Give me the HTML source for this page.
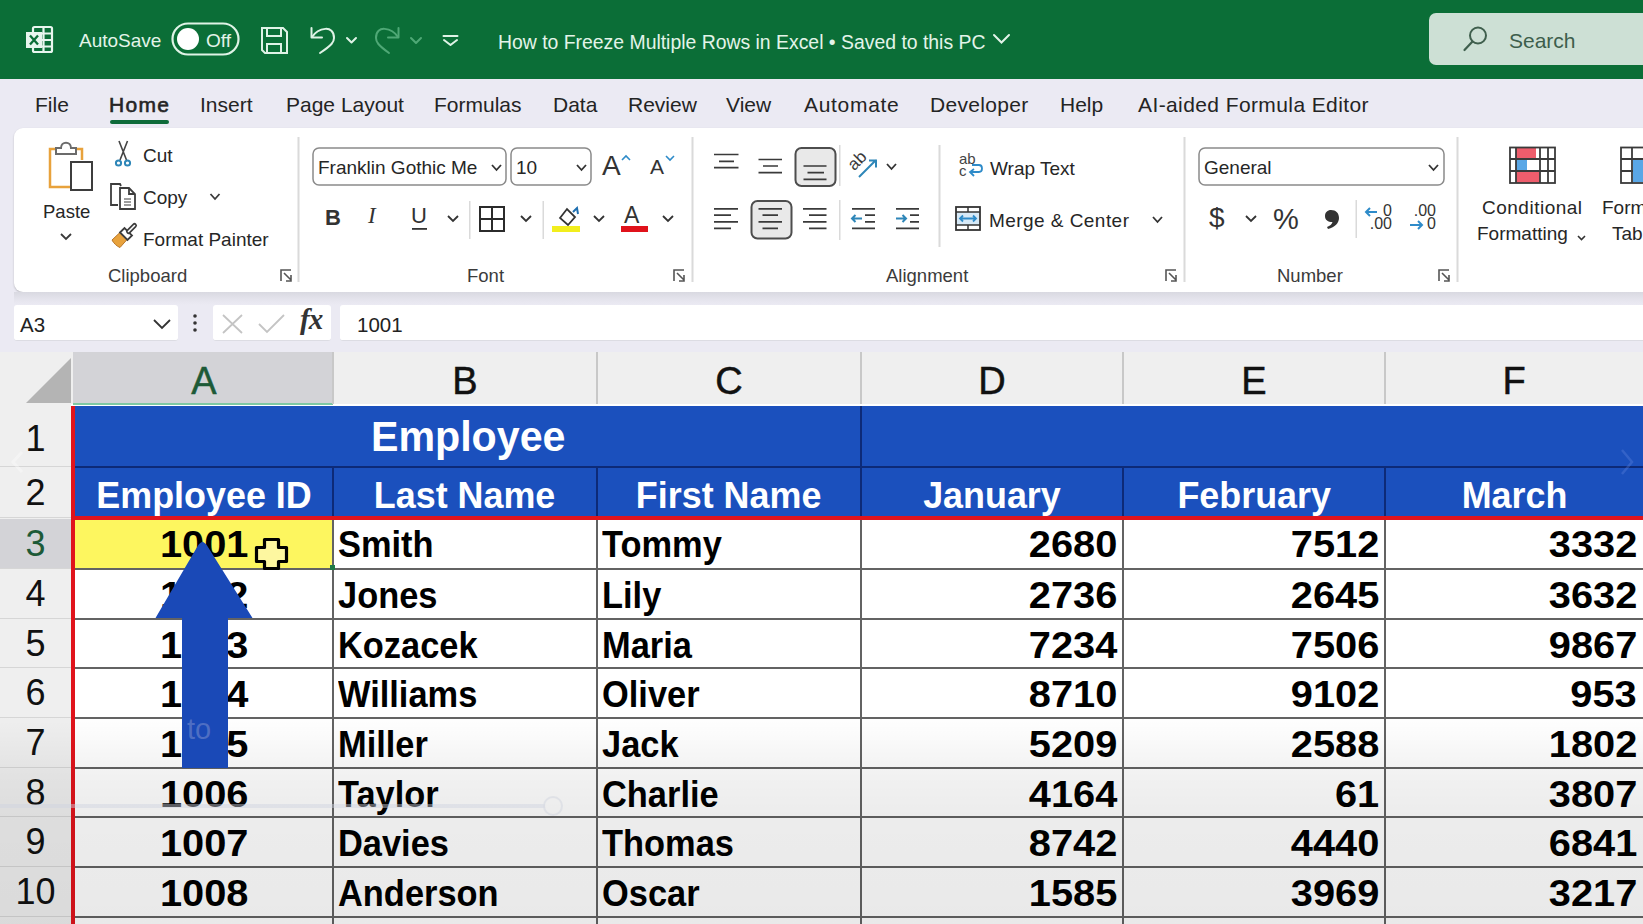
<!DOCTYPE html>
<html><head><meta charset="utf-8">
<style>
*{margin:0;padding:0;box-sizing:border-box}
html,body{width:1643px;height:924px;overflow:hidden;background:#fff;font-family:"Liberation Sans",sans-serif}
.a{position:absolute}
svg{position:absolute;overflow:visible}
#title{left:0;top:0;width:1643px;height:79px;background:#0b6e37}
.tt{position:absolute;color:#e3f4e9;white-space:nowrap;font-size:19px}
#tabs{left:0;top:79px;width:1643px;height:273px;background:#ebeaf3}
.tab{position:absolute;top:93px;font-size:21px;color:#242424;white-space:nowrap}
#ribbon{left:14px;top:128px;width:1660px;height:164px;background:#fff;border-radius:9px;box-shadow:0 1px 2px rgba(0,0,0,.22)}
.rt{position:absolute;font-size:19px;color:#262626;white-space:nowrap}
.gl{position:absolute;top:265px;font-size:18.5px;color:#3b3b3b;white-space:nowrap}
.sep{position:absolute;width:2px;background:#d9d9d9}
.box{position:absolute;background:#fff;border:1.5px solid #8a8a8a;border-radius:6px}
.ch{position:absolute;top:352px;height:51px;font-size:38px;color:#111;text-align:center;line-height:59px;-webkit-text-stroke:0.5px currentColor}
.chs{position:absolute;top:352px;width:2px;height:52px;background:#c8c8c8}
.rh{position:absolute;left:0;width:71px;font-size:36px;color:#111;text-align:center}
.c{position:absolute;font-weight:bold;font-size:37px;color:#000;white-space:nowrap;line-height:54px}
.c span{display:inline-block}
.sh{transform:scaleX(0.97)}
.sn{transform:scaleX(1.075)}
.st{transform:scaleX(0.93);transform-origin:left center}
.sr{transform:scaleX(1.075);transform-origin:right center}
.hl{position:absolute;height:2px;background:#636363}
.vl{position:absolute;width:2px;background:#636363}
.w{color:#fff}
</style></head><body>
<!-- TITLE BAR -->
<div id="title" class="a"></div>
<svg style="left:0;top:0" width="1643" height="78">
 <!-- excel icon -->
 <g fill="none" stroke="#e8f6ee" stroke-width="2.2">
  <rect x="33" y="27" width="19" height="25" rx="1.5"/>
  <path d="M39 33.5H51M39 40H51M39 46.5H51M43.5 27V52"/>
 </g>
 <rect x="26" y="32" width="16" height="16" fill="#e8f6ee"/>
 <path d="M30 35.5L38 44.5M38 35.5L30 44.5" stroke="#0b6e37" stroke-width="2.3"/>
 <!-- toggle -->
 <rect x="172.5" y="23.5" width="66" height="31" rx="15.5" fill="none" stroke="#dff3e6" stroke-width="2.2"/>
 <circle cx="188" cy="39" r="11" fill="#fff"/>
 <!-- save -->
 <g fill="none" stroke="#dff3e6" stroke-width="2">
  <path d="M262 28H283L287 32V53H265L262 50Z"/>
  <path d="M267 28V36H281V28M267 53V44H281V53"/>
 </g>
 <!-- undo -->
 <g fill="none" stroke="#dff3e6" stroke-width="2" stroke-linecap="round" stroke-linejoin="round">
  <path d="M311.5 28V37.5H322"/>
  <path d="M312 37C318 28 334 24 334 38C334 42 332 45 320 53"/>
  <path d="M347 38L351.5 42.5L356 38"/>
  <path d="M443.5 36H457.5M444 40L450.5 45L457 40"/>
 </g>
 <!-- redo dim -->
 <g fill="none" stroke="#4fa876" stroke-width="2" stroke-linecap="round" stroke-linejoin="round">
  <path d="M398.5 28V37.5H388"/>
  <path d="M398 37C392 28 376 24 376 38C376 42 378 45 389 53"/>
  <path d="M411 38L416 43L421 38"/>
 </g>
 <!-- title chevron -->
 <path d="M994 35L1001.5 42.5L1009 35" fill="none" stroke="#e3f4e9" stroke-width="2" stroke-linecap="round"/>
 <!-- search box -->
 <rect x="1429" y="13" width="240" height="52" rx="7" fill="#cde0d5"/>
 <circle cx="1478" cy="35.5" r="8" fill="none" stroke="#3f5f4d" stroke-width="2"/>
 <path d="M1472.5 41.5L1464.5 50" stroke="#3f5f4d" stroke-width="2.2" stroke-linecap="round"/>
</svg>
<div class="tt" style="left:79px;top:30px">AutoSave</div>
<div class="tt" style="left:206px;top:30px">Off</div>
<div class="tt" style="left:498px;top:31px;font-size:19.4px">How to Freeze Multiple Rows in Excel &#8226; Saved to this PC</div>
<div class="tt" style="left:1509px;top:29px;font-size:21px;color:#3d5e4c">Search</div>
<!-- TABS + formula bar bg -->
<div id="tabs" class="a"></div>
<div class="tab" style="left:35px">File</div>
<div class="tab" style="left:109px;-webkit-text-stroke:0.6px #242424;letter-spacing:1.3px">Home</div>
<div class="a" style="left:110px;top:120px;width:59px;height:4px;border-radius:2px;background:#0f6b3a"></div>
<div class="tab" style="left:200px">Insert</div>
<div class="tab" style="left:286px">Page Layout</div>
<div class="tab" style="left:434px">Formulas</div>
<div class="tab" style="left:553px">Data</div>
<div class="tab" style="left:628px">Review</div>
<div class="tab" style="left:726px">View</div>
<div class="tab" style="left:804px;letter-spacing:0.7px">Automate</div>
<div class="tab" style="left:930px;letter-spacing:0.3px">Developer</div>
<div class="tab" style="left:1060px">Help</div>
<div class="tab" style="left:1138px;letter-spacing:0.4px">AI-aided Formula Editor</div>
<!-- RIBBON -->
<div id="ribbon" class="a"></div>
<svg style="left:0;top:0" width="1643" height="300">
 <!-- separators -->
 <g fill="#dadada">
  <rect x="297.5" y="137" width="2" height="145"/>
  <rect x="691.5" y="137" width="2" height="145"/>
  <rect x="1183.5" y="137" width="2" height="145"/>
  <rect x="1456.5" y="137" width="2" height="145"/>
  <rect x="469" y="201" width="1.5" height="38"/>
  <rect x="542.5" y="201" width="1.5" height="38"/>
  <rect x="839" y="145" width="1.5" height="41"/>
  <rect x="839" y="200" width="1.5" height="40"/>
  <rect x="938.5" y="145" width="2" height="102"/>
  <rect x="1355.5" y="200" width="1.5" height="38"/>
 </g>
 <!-- paste clipboard -->
 <path d="M58 149H50V187H70" fill="none" stroke="#e8a23c" stroke-width="2.5"/>
 <path d="M76 149H82V160" fill="none" stroke="#e8a23c" stroke-width="2.5"/>
 <path d="M56 154V148H61C61 141 71 141 71 148H76V154Z" fill="#fff" stroke="#6b6b6b" stroke-width="2"/>
 <rect x="71" y="162" width="21" height="28" fill="#fff" stroke="#3d3d3d" stroke-width="2"/>
 <path d="M61 234L66 239L71 234" fill="none" stroke="#3a3a3a" stroke-width="1.8"/>
 <!-- cut -->
 <g fill="none" stroke-width="1.8">
  <path d="M119 141L126.5 160M127.5 141L120 160" stroke="#444" stroke-width="1.6"/>
  <circle cx="118.5" cy="163" r="2.6" stroke="#2e86b8" stroke-width="2"/>
  <circle cx="127.5" cy="163" r="2.6" stroke="#2e86b8" stroke-width="2"/>
 </g>
 <!-- copy -->
 <g fill="none" stroke="#3d3d3d" stroke-width="1.8">
  <path d="M118 205H111V184H120L121 186"/>
  <path d="M120 188V209H135V194L129 188Z"/>
  <path d="M129 188V194H135"/>
  <path d="M124 199H131M124 202H131M124 205H131" stroke-width="1.1"/>
 </g>
 <path d="M210.5 194L215 199L219.5 194" fill="none" stroke="#3a3a3a" stroke-width="1.8"/>
 <!-- format painter -->
 <path d="M112 240L120.5 232L127.5 239L120 247.5C117 246.5 113.5 243 112 240Z" fill="#e8a23c" stroke="#b9772a" stroke-width="1"/>
 <path d="M120 232.5L124.5 228L132 235.5L127.5 240Z" fill="#fff" stroke="#3d3d3d" stroke-width="1.8"/>
 <path d="M128.5 231.5L134.5 225.5" stroke="#3d3d3d" stroke-width="5" stroke-linecap="round"/>
 <path d="M128.5 231.5L134.5 225.5" stroke="#fff" stroke-width="1.6" stroke-linecap="round"/>
 <!-- launchers -->
 <g fill="none" stroke="#555" stroke-width="1.6">
  <path d="M281 281V270H291M284 273L291 280M291 275V281H286"/>
  <path d="M674 281V270H684M677 273L684 280M684 275V281H679"/>
  <path d="M1166 281V270H1176M1169 273L1176 280M1176 275V281H1171"/>
  <path d="M1439 281V270H1449M1442 273L1449 280M1449 275V281H1444"/>
 </g>
 <!-- font boxes -->
 <rect x="313" y="148" width="193" height="37" rx="6" fill="#fff" stroke="#8a8a8a" stroke-width="1.5"/>
 <rect x="511" y="148" width="80" height="37" rx="6" fill="#fff" stroke="#8a8a8a" stroke-width="1.5"/>
 <g fill="none" stroke="#333" stroke-width="1.8">
  <path d="M492 165L496.5 170L501 165"/>
  <path d="M577 165L581.5 170L586 165"/>
  <path d="M448 216L453 221L458 216"/>
  <path d="M521 216L526 221L531 216"/>
  <path d="M594 216L599 221L604 216"/>
  <path d="M663 216L668 221L673 216"/>
 </g>
 <!-- grow/shrink -->
 <path d="M622 160L626 156L630 160" fill="none" stroke="#2e8bc9" stroke-width="1.6"/>
 <path d="M666 156L670 160L674 156" fill="none" stroke="#2e8bc9" stroke-width="1.6"/>
 <!-- borders icon -->
 <g fill="none" stroke="#2b2b2b" stroke-width="2">
  <rect x="480" y="207" width="24" height="24"/>
  <path d="M492 207V231M480 219H504"/>
 </g>
 <!-- fill color -->
 <path d="M560 218L567 209L575 217L568 225Z" fill="#fff" stroke="#333" stroke-width="1.8"/>
 <path d="M573 212L577 208L578 214" fill="none" stroke="#1f6fb0" stroke-width="2"/>
 <rect x="552" y="226" width="28" height="6" fill="#f2ee1d"/>
 <rect x="621" y="226" width="27" height="6" fill="#e0121b"/>
 <!-- underline -->
 <rect x="412" y="228" width="15" height="1.8" fill="#333"/>
 <!-- alignment icons -->
 <rect x="795.5" y="148" width="40" height="38" rx="6" fill="#e9e9e9" stroke="#4d4d4d" stroke-width="2"/>
 <rect x="751.5" y="201" width="40" height="37.5" rx="6" fill="#e9e9e9" stroke="#4d4d4d" stroke-width="2"/>
 <g stroke="#3a3a3a" stroke-width="1.7">
  <path d="M714 154.5H738.5M719 161.3H734M714 167.7H738.5"/>
  <path d="M758.5 159.5H782M763 166H778M758.5 172.7H782"/>
  <path d="M803.5 166H826.5M807.5 172.7H824M803.5 179.3H826.5"/>
  <path d="M714 208.8H738M714 215.2H731M714 221.8H738M714 228.4H731"/>
  <path d="M758.5 208.8H782M762.5 215.2H778M758.5 221.8H782M762.5 228.4H778"/>
  <path d="M803 208.8H826.5M809 215.2H826.5M803 221.8H826.5M809 228.4H826.5"/>
  <path d="M852 208.8H875M865 215.2H875M865 221.8H875M852 228.4H875"/>
  <path d="M896 208.8H919M910 215.2H919M910 221.8H919M896 228.4H919"/>
 </g>
 <g stroke="#2e86b8" stroke-width="2" fill="none">
  <path d="M852 218.5H862M855.5 215L852 218.5L855.5 222"/>
  <path d="M896 218.5H906M902.5 215L906 218.5L902.5 222"/>
  <path d="M859 177L876 160M869 160.5H876V167.5"/>
 </g>
 <path d="M887 164L891.5 169L896 164" fill="none" stroke="#333" stroke-width="1.8"/>
 <!-- wrap text icon -->
 <path d="M970 172H979C983 172 983 165 979 165H972M974 169L970 172L974 176" fill="none" stroke="#2e8bc9" stroke-width="1.8"/>
 <!-- merge icon -->
 <rect x="956" y="207" width="24" height="23" fill="#fff" stroke="#333" stroke-width="1.8"/>
 <rect x="957" y="212" width="22" height="13" fill="#d6e9f7"/>
 <path d="M956 212H980M956 225H980M968 207V212M968 225V230" stroke="#333" stroke-width="1.5"/>
 <path d="M960 218.5H976M963 215.5L960 218.5L963 221.5M973 215.5L976 218.5L973 221.5" fill="none" stroke="#2e8bc9" stroke-width="1.8"/>
 <path d="M1153 217L1157.5 222L1162 217" fill="none" stroke="#333" stroke-width="1.8"/>
 <!-- number box -->
 <rect x="1199" y="148" width="245" height="37" rx="6" fill="#fff" stroke="#8a8a8a" stroke-width="1.5"/>
 <path d="M1429 165L1433.5 170L1438 165" fill="none" stroke="#333" stroke-width="1.8"/>
 <path d="M1246 216L1251 221L1256 216" fill="none" stroke="#333" stroke-width="1.8"/>
 <g stroke="#2e8bc9" stroke-width="2" fill="none">
  <path d="M1366 212H1377M1370 208L1366 212L1370 216"/>
  <path d="M1410 225H1422M1418 221L1422 225L1418 229"/>
 </g>
 <!-- conditional formatting icon -->
 <g>
  <rect x="1510" y="147" width="45" height="36" fill="#fff"/>
  <rect x="1516" y="147" width="20" height="12" fill="#ee5d6c"/>
  <rect x="1516" y="159" width="11" height="12" fill="#5aa7e6"/>
  <rect x="1516" y="171" width="24" height="12" fill="#ee5d6c"/>
  <g fill="none" stroke="#3a3a3a" stroke-width="1.8">
   <rect x="1510" y="147.5" width="45" height="35.5"/>
   <path d="M1510 159H1555M1510 171H1555M1516 147V183M1540 147V183M1548 147V183"/>
  </g>
 </g>
 <!-- format as table partial -->
 <g>
  <rect x="1621" y="147.5" width="30" height="35.5" fill="#fff" stroke="#3a3a3a" stroke-width="1.8"/>
  <path d="M1621 159H1651M1621 171H1651M1632 147V183" stroke="#3a3a3a" stroke-width="1.8"/>
  <rect x="1633" y="160" width="12" height="22" fill="#5aa7e6"/>
 </g>
 <path d="M1578 236L1581.5 239.5L1585 236" fill="none" stroke="#333" stroke-width="1.6"/>
 <path d="M1331 210C1336 210 1339 213 1339 218C1339 223 1335 227 1328 229L1327 227C1330 226 1332 224 1332.5 222C1328 222 1325 220 1325 216C1325 212.5 1327.5 210 1331 210Z" fill="#333"/>
</svg>
<div class="rt" style="left:43px;top:201px;font-size:18.5px">Paste</div>
<div class="rt" style="left:143px;top:145px">Cut</div>
<div class="rt" style="left:143px;top:187px">Copy</div>
<div class="rt" style="left:143px;top:229px">Format Painter</div>
<div class="gl" style="left:108px">Clipboard</div>
<div class="rt" style="left:318px;top:157px;font-size:19px">Franklin Gothic Me</div>
<div class="rt" style="left:516px;top:157px;font-size:19px">10</div>
<div class="rt" style="left:602px;top:150px;font-size:28px;color:#333">A</div>
<div class="rt" style="left:650px;top:155px;font-size:21px;color:#333">A</div>
<div class="rt" style="left:325px;top:205px;font-size:22px;font-weight:bold;color:#333">B</div>
<div class="rt" style="left:368px;top:203px;font-size:23px;font-style:italic;font-family:'Liberation Serif',serif;color:#333">I</div>
<div class="rt" style="left:411px;top:203px;font-size:22px;color:#333">U</div>
<div class="rt" style="left:624px;top:202px;font-size:23px;color:#333">A</div>
<div class="gl" style="left:467px">Font</div>
<div class="rt" style="left:959px;top:153px;font-size:15px;color:#444;line-height:12px">ab<br>c</div>
<div class="rt" style="left:990px;top:158px">Wrap Text</div>
<div class="rt" style="left:989px;top:210px;letter-spacing:0.45px">Merge &amp; Center</div>
<div class="rt" style="left:848px;top:151px;font-size:17px;color:#3a3a3a;transform:rotate(-45deg);transform-origin:center">ab</div>
<div class="gl" style="left:886px">Alignment</div>
<div class="rt" style="left:1204px;top:157px">General</div>
<div class="rt" style="left:1209px;top:202px;font-size:28px;color:#333">$</div>
<div class="rt" style="left:1273px;top:203px;font-size:29px;color:#333">%</div>

<div class="rt" style="left:1369px;top:204px;font-size:16px;color:#333;line-height:13px;text-align:right;width:23px">0<br>.00</div>
<div class="rt" style="left:1413px;top:204px;font-size:16px;color:#333;line-height:13px;text-align:right;width:23px">.00<br>0</div>
<div class="gl" style="left:1277px">Number</div>
<div class="rt" style="left:1482px;top:197px;letter-spacing:0.5px">Conditional</div>
<div class="rt" style="left:1477px;top:223px">Formatting</div>
<div class="rt" style="left:1602px;top:197px">Form</div>
<div class="rt" style="left:1612px;top:223px">Tab</div>
<!-- FORMULA BAR -->
<div class="a" style="left:14px;top:292px;width:1643px;height:13px;background:linear-gradient(#d9d9e1,#e7e6ef 70%,#ebeaf3)"></div>
<div class="a" style="left:14px;top:305px;width:164px;height:36px;background:#fff;border-radius:3px;border-bottom:1.5px solid #dcdce3"></div>
<div class="a" style="left:213px;top:305px;width:118px;height:36px;background:#fff;border-radius:3px;border-bottom:1.5px solid #dcdce3"></div>
<div class="a" style="left:340px;top:305px;width:1320px;height:36px;background:#fff;border-radius:3px;border-bottom:1.5px solid #dcdce3"></div>
<svg style="left:0;top:290px" width="400" height="60">
 <path d="M154 30L162 38L170 30" fill="none" stroke="#333" stroke-width="1.8"/>
 <circle cx="195" cy="26" r="1.8" fill="#333"/><circle cx="195" cy="33" r="1.8" fill="#333"/><circle cx="195" cy="40" r="1.8" fill="#333"/>
 <path d="M223 25L242 43M242 25L223 43" stroke="#c4c4c4" stroke-width="1.8"/>
 <path d="M259 34L267 42L284 25" fill="none" stroke="#c4c4c4" stroke-width="1.8"/>
</svg>
<div class="rt" style="left:20px;top:313px;font-size:20.5px;color:#222">A3</div>
<div class="rt" style="left:300px;top:303px;font-size:29px;font-style:italic;font-weight:bold;font-family:'Liberation Serif',serif;color:#333;letter-spacing:-1px">fx</div>
<div class="rt" style="left:357px;top:313px;font-size:20.5px;color:#222">1001</div>
<!-- GRID -->
<div class="a" style="left:0;top:352px;width:1643px;height:572px;background:#fff"></div>
<div class="a" style="left:0;top:352px;width:1643px;height:52px;background:#efefef"></div>
<div class="a" style="left:0;top:352px;width:71px;height:572px;background:#efefef"></div>
<div class="a" style="left:73px;top:352px;width:260px;height:51px;background:#d3d3d7"></div>
<div class="a" style="left:73px;top:403px;width:260px;height:2px;background:#7fc8a4"></div>
<div class="a" style="left:0;top:519px;width:71px;height:50px;background:#d3d3d7"></div>
<svg style="left:0;top:352px" width="75" height="54"><path d="M26 51L71 51L71 6Z" fill="#b4b4b4"/></svg>
<div class="chs" style="left:332px"></div>
<div class="chs" style="left:596px"></div>
<div class="chs" style="left:860px"></div>
<div class="chs" style="left:1122px"></div>
<div class="chs" style="left:1384px"></div>
<div class="ch" style="left:75px;width:258px;color:#1d5a37">A</div>
<div class="ch" style="left:333px;width:264px;color:#111">B</div>
<div class="ch" style="left:597px;width:264px;color:#111">C</div>
<div class="ch" style="left:861px;width:262px;color:#111">D</div>
<div class="ch" style="left:1123px;width:262px;color:#111">E</div>
<div class="ch" style="left:1385px;width:258px;color:#111">F</div>
<div class="a" style="left:0;top:466px;width:71px;height:1px;background:#d6d6d6"></div>
<div class="rh" style="top:406px;height:61px;line-height:66px;color:#111">1</div>
<div class="a" style="left:0;top:517px;width:71px;height:1px;background:#d6d6d6"></div>
<div class="rh" style="top:467px;height:51px;line-height:51px;color:#111">2</div>
<div class="a" style="left:0;top:568px;width:71px;height:1px;background:#d6d6d6"></div>
<div class="rh" style="top:518px;height:51px;line-height:51px;color:#1d5a37">3</div>
<div class="a" style="left:0;top:618px;width:71px;height:1px;background:#d6d6d6"></div>
<div class="rh" style="top:569px;height:50px;line-height:50px;color:#111">4</div>
<div class="a" style="left:0;top:667px;width:71px;height:1px;background:#d6d6d6"></div>
<div class="rh" style="top:619px;height:49px;line-height:49px;color:#111">5</div>
<div class="a" style="left:0;top:717px;width:71px;height:1px;background:#d6d6d6"></div>
<div class="rh" style="top:668px;height:50px;line-height:50px;color:#111">6</div>
<div class="a" style="left:0;top:767px;width:71px;height:1px;background:#d6d6d6"></div>
<div class="rh" style="top:718px;height:50px;line-height:50px;color:#111">7</div>
<div class="a" style="left:0;top:816px;width:71px;height:1px;background:#d6d6d6"></div>
<div class="rh" style="top:768px;height:49px;line-height:49px;color:#111">8</div>
<div class="a" style="left:0;top:866px;width:71px;height:1px;background:#d6d6d6"></div>
<div class="rh" style="top:817px;height:50px;line-height:50px;color:#111">9</div>
<div class="a" style="left:0;top:916px;width:71px;height:1px;background:#d6d6d6"></div>
<div class="rh" style="top:867px;height:50px;line-height:50px;color:#111">10</div>
<div class="a" style="left:75px;top:406px;width:1568px;height:112px;background:#1b50bd"></div>
<div class="a" style="left:75px;top:520px;width:258px;height:49px;background:#fdf65f"></div>
<div class="hl" style="left:75px;top:568px;width:1568px"></div>
<div class="hl" style="left:75px;top:618px;width:1568px"></div>
<div class="hl" style="left:75px;top:667px;width:1568px"></div>
<div class="hl" style="left:75px;top:717px;width:1568px"></div>
<div class="hl" style="left:75px;top:767px;width:1568px"></div>
<div class="hl" style="left:75px;top:816px;width:1568px"></div>
<div class="hl" style="left:75px;top:866px;width:1568px"></div>
<div class="hl" style="left:75px;top:916px;width:1568px"></div>
<div class="vl" style="left:332px;top:518px;height:420px"></div>
<div class="vl" style="left:596px;top:518px;height:420px"></div>
<div class="vl" style="left:860px;top:518px;height:420px"></div>
<div class="vl" style="left:1122px;top:518px;height:420px"></div>
<div class="vl" style="left:1384px;top:518px;height:420px"></div>
<div class="a" style="left:75px;top:466px;width:1568px;height:2px;background:#0d2a78"></div>
<div class="a" style="left:332px;top:467px;width:2px;height:50px;background:#0d2a78"></div>
<div class="a" style="left:596px;top:467px;width:2px;height:50px;background:#0d2a78"></div>
<div class="a" style="left:860px;top:467px;width:2px;height:50px;background:#0d2a78"></div>
<div class="a" style="left:1122px;top:467px;width:2px;height:50px;background:#0d2a78"></div>
<div class="a" style="left:1384px;top:467px;width:2px;height:50px;background:#0d2a78"></div>
<div class="a" style="left:860px;top:406px;width:2px;height:61px;background:#0d2a78"></div>
<div class="a" style="left:71px;top:516px;width:1572px;height:4px;background:#e0141c"></div>
<div class="a" style="left:71px;top:406px;width:4px;height:518px;background:#e0141c"></div>
<div class="c w" style="left:75px;top:406px;width:786px;line-height:62px;text-align:center;font-size:42px"><span style="display:inline-block;transform:scaleX(0.98)">Employee</span></div>
<div class="c w" style="left:75px;top:467px;width:258px;line-height:57px;text-align:center"><span class="sh">Employee ID</span></div>
<div class="c w" style="left:333px;top:467px;width:264px;line-height:57px;text-align:center"><span class="sh">Last Name</span></div>
<div class="c w" style="left:597px;top:467px;width:264px;line-height:57px;text-align:center"><span class="sh">First Name</span></div>
<div class="c w" style="left:861px;top:467px;width:262px;line-height:57px;text-align:center"><span class="sh">January</span></div>
<div class="c w" style="left:1123px;top:467px;width:262px;line-height:57px;text-align:center"><span class="sh">February</span></div>
<div class="c w" style="left:1385px;top:467px;width:258px;line-height:57px;text-align:center"><span class="sh">March</span></div>
<div class="c" style="left:75px;top:518px;width:258px;text-align:center"><span class="sn">1001</span></div>
<div class="c" style="left:338px;top:518px"><span class="st">Smith</span></div>
<div class="c" style="left:602px;top:518px"><span class="st">Tommy</span></div>
<div class="c" style="left:861px;top:518px;width:256px;text-align:right"><span class="sr">2680</span></div>
<div class="c" style="left:1123px;top:518px;width:256px;text-align:right"><span class="sr">7512</span></div>
<div class="c" style="left:1385px;top:518px;width:252px;text-align:right"><span class="sr">3332</span></div>
<div class="c" style="left:75px;top:569px;width:258px;text-align:center"><span class="sn">1002</span></div>
<div class="c" style="left:338px;top:569px"><span class="st">Jones</span></div>
<div class="c" style="left:602px;top:569px"><span class="st">Lily</span></div>
<div class="c" style="left:861px;top:569px;width:256px;text-align:right"><span class="sr">2736</span></div>
<div class="c" style="left:1123px;top:569px;width:256px;text-align:right"><span class="sr">2645</span></div>
<div class="c" style="left:1385px;top:569px;width:252px;text-align:right"><span class="sr">3632</span></div>
<div class="c" style="left:75px;top:619px;width:258px;text-align:center"><span class="sn">1003</span></div>
<div class="c" style="left:338px;top:619px"><span class="st">Kozacek</span></div>
<div class="c" style="left:602px;top:619px"><span class="st">Maria</span></div>
<div class="c" style="left:861px;top:619px;width:256px;text-align:right"><span class="sr">7234</span></div>
<div class="c" style="left:1123px;top:619px;width:256px;text-align:right"><span class="sr">7506</span></div>
<div class="c" style="left:1385px;top:619px;width:252px;text-align:right"><span class="sr">9867</span></div>
<div class="c" style="left:75px;top:668px;width:258px;text-align:center"><span class="sn">1004</span></div>
<div class="c" style="left:338px;top:668px"><span class="st">Williams</span></div>
<div class="c" style="left:602px;top:668px"><span class="st">Oliver</span></div>
<div class="c" style="left:861px;top:668px;width:256px;text-align:right"><span class="sr">8710</span></div>
<div class="c" style="left:1123px;top:668px;width:256px;text-align:right"><span class="sr">9102</span></div>
<div class="c" style="left:1385px;top:668px;width:252px;text-align:right"><span class="sr">953</span></div>
<div class="c" style="left:75px;top:718px;width:258px;text-align:center"><span class="sn">1005</span></div>
<div class="c" style="left:338px;top:718px"><span class="st">Miller</span></div>
<div class="c" style="left:602px;top:718px"><span class="st">Jack</span></div>
<div class="c" style="left:861px;top:718px;width:256px;text-align:right"><span class="sr">5209</span></div>
<div class="c" style="left:1123px;top:718px;width:256px;text-align:right"><span class="sr">2588</span></div>
<div class="c" style="left:1385px;top:718px;width:252px;text-align:right"><span class="sr">1802</span></div>
<div class="c" style="left:75px;top:768px;width:258px;text-align:center"><span class="sn">1006</span></div>
<div class="c" style="left:338px;top:768px"><span class="st">Taylor</span></div>
<div class="c" style="left:602px;top:768px"><span class="st">Charlie</span></div>
<div class="c" style="left:861px;top:768px;width:256px;text-align:right"><span class="sr">4164</span></div>
<div class="c" style="left:1123px;top:768px;width:256px;text-align:right"><span class="sr">61</span></div>
<div class="c" style="left:1385px;top:768px;width:252px;text-align:right"><span class="sr">3807</span></div>
<div class="c" style="left:75px;top:817px;width:258px;text-align:center"><span class="sn">1007</span></div>
<div class="c" style="left:338px;top:817px"><span class="st">Davies</span></div>
<div class="c" style="left:602px;top:817px"><span class="st">Thomas</span></div>
<div class="c" style="left:861px;top:817px;width:256px;text-align:right"><span class="sr">8742</span></div>
<div class="c" style="left:1123px;top:817px;width:256px;text-align:right"><span class="sr">4440</span></div>
<div class="c" style="left:1385px;top:817px;width:252px;text-align:right"><span class="sr">6841</span></div>
<div class="c" style="left:75px;top:867px;width:258px;text-align:center"><span class="sn">1008</span></div>
<div class="c" style="left:338px;top:867px"><span class="st">Anderson</span></div>
<div class="c" style="left:602px;top:867px"><span class="st">Oscar</span></div>
<div class="c" style="left:861px;top:867px;width:256px;text-align:right"><span class="sr">1585</span></div>
<div class="c" style="left:1123px;top:867px;width:256px;text-align:right"><span class="sr">3969</span></div>
<div class="c" style="left:1385px;top:867px;width:252px;text-align:right"><span class="sr">3217</span></div>
<!-- /GRID -->
<!-- OVERLAYS -->
<div class="a" style="left:0;top:716px;width:1643px;height:208px;background:linear-gradient(to bottom,rgba(0,0,0,0) 0px,rgba(0,0,0,0.055) 60px,rgba(0,0,0,0.075) 100px,rgba(0,0,0,0.085) 208px)"></div>
<svg style="left:0;top:0" width="1643" height="924">
 <rect x="0" y="804" width="545" height="4" fill="#cfd3e0" opacity="0.45"/>
 <circle cx="553" cy="806" r="9" fill="none" stroke="#d8dbe3" stroke-width="2" opacity="0.7"/>
 <path d="M202.5 542C204 542 206 544 207 545.5L252.5 618H228V768H182V618H155.5L198 545.5C199 544 201 542 202.5 542Z" fill="#1a49b7"/>
 <path d="M264.5 539.5H278.5V547.5H286.5V561.5H278.5V568.5H264.5V561.5H256.5V547.5H264.5Z" fill="#fdf7a0" stroke="#000" stroke-width="3.2" stroke-linejoin="round"/>
</svg>
<div class="a" style="left:187px;top:713px;font-size:29px;color:#5b78c6;opacity:0.8">to</div>
<svg style="left:0;top:0" width="1643" height="924"><path d="M22 452L13 462L22 472" fill="none" stroke="#fff" stroke-width="3" opacity="0.35"/><path d="M1622 450L1632 462L1622 474" fill="none" stroke="#6d8ee0" stroke-width="2.5" opacity="0.3"/><rect x="330" y="565" width="5" height="5" fill="#1e7a45"/></svg>
</body></html>
